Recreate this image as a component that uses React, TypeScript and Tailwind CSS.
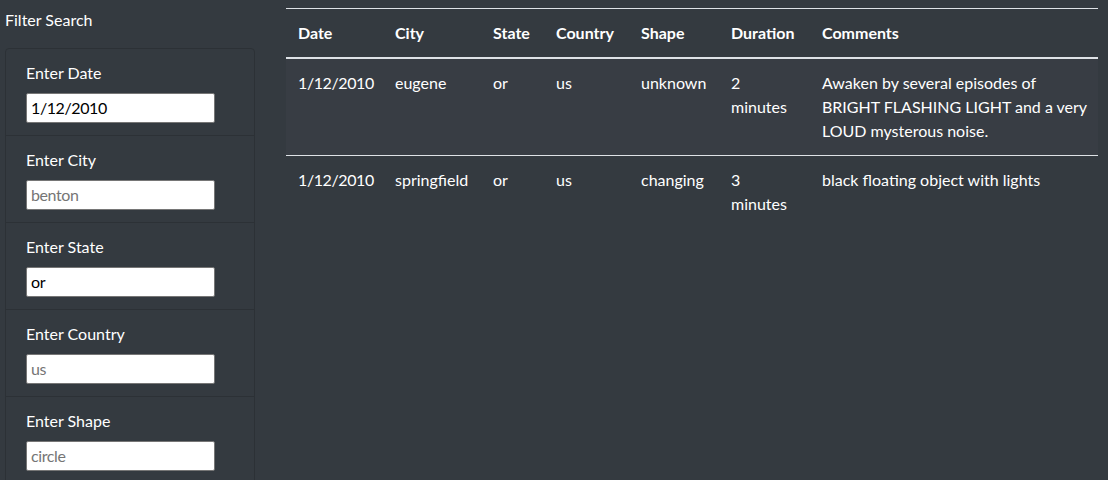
import React from "react";

const fields = [
  { label: "Enter Date", value: "1/12/2010", placeholder: "" },
  { label: "Enter City", value: "", placeholder: "benton" },
  { label: "Enter State", value: "or", placeholder: "" },
  { label: "Enter Country", value: "", placeholder: "us" },
  { label: "Enter Shape", value: "", placeholder: "circle" },
];

const rows = [
  {
    date: "1/12/2010",
    city: "eugene",
    state: "or",
    country: "us",
    shape: "unknown",
    duration: "2 minutes",
    comments: "Awaken by several episodes of BRIGHT FLASHING LIGHT and a very LOUD mysterous noise.",
  },
  {
    date: "1/12/2010",
    city: "springfield",
    state: "or",
    country: "us",
    shape: "changing",
    duration: "3 minutes",
    comments: "black floating object with lights",
  },
];

export default function App() {
  return (
    <div
      className="w-[1108px] h-[480px] overflow-hidden bg-[#343a40] text-white flex"
      style={{ fontFamily: "Lato, 'Noto Sans', sans-serif" }}
    >
      <div className="w-[255px] pl-[5px] shrink-0">
        <div className="h-[48px] pt-[8px] text-[16px] leading-[24px]">Filter Search</div>
        <div className="border border-[#2c3136] rounded-[4px]">
          {fields.map((f) => (
            <div key={f.label} className="px-[20px] py-[12px] border-b border-[#2c3136]">
              <div className="text-[16px] leading-[24px] mb-[8px]">{f.label}</div>
              <input
                readOnly
                value={f.value}
                placeholder={f.placeholder}
                className="block w-[189px] h-[30px] bg-white text-black border border-[#767676] rounded-[2px] px-[4px] pb-[1px] text-[16px] tracking-[-0.4px] placeholder:text-[#757575] outline-none"
                style={{ fontFamily: "Lato, 'Noto Sans', sans-serif" }}
              />
            </div>
          ))}
        </div>
      </div>
      <div className="pl-[31px] pt-[8px] w-[843px] shrink-0">
        <table className="w-[812px] table-fixed border-collapse text-[16px] leading-[24px]">
          <colgroup>
            <col className="w-[97px]" />
            <col className="w-[98px]" />
            <col className="w-[63px]" />
            <col className="w-[85px]" />
            <col className="w-[90px]" />
            <col className="w-[91px]" />
            <col className="w-[288px]" />
          </colgroup>
          <thead>
            <tr className="border-t border-[#dee2e6] border-b-2">
              {["Date", "City", "State", "Country", "Shape", "Duration", "Comments"].map((h) => (
                <th key={h} className="text-left font-bold p-[12px] align-bottom">
                  {h}
                </th>
              ))}
            </tr>
          </thead>
          <tbody>
            {rows.map((r, i) => (
              <tr
                key={i}
                className={i === 0 ? "bg-[#383d44] border-b border-[#dee2e6]" : ""}
              >
                <td className="p-[12px] align-top tracking-[-0.4px]">{r.date}</td>
                <td className="p-[12px] align-top">{r.city}</td>
                <td className="p-[12px] align-top">{r.state}</td>
                <td className="p-[12px] align-top">{r.country}</td>
                <td className="p-[12px] align-top">{r.shape}</td>
                <td className="p-[12px] align-top">{r.duration}</td>
                <td className="pl-[12px] pr-[4px] py-[12px] align-top">{r.comments}</td>
              </tr>
            ))}
          </tbody>
        </table>
      </div>
    </div>
  );
}
